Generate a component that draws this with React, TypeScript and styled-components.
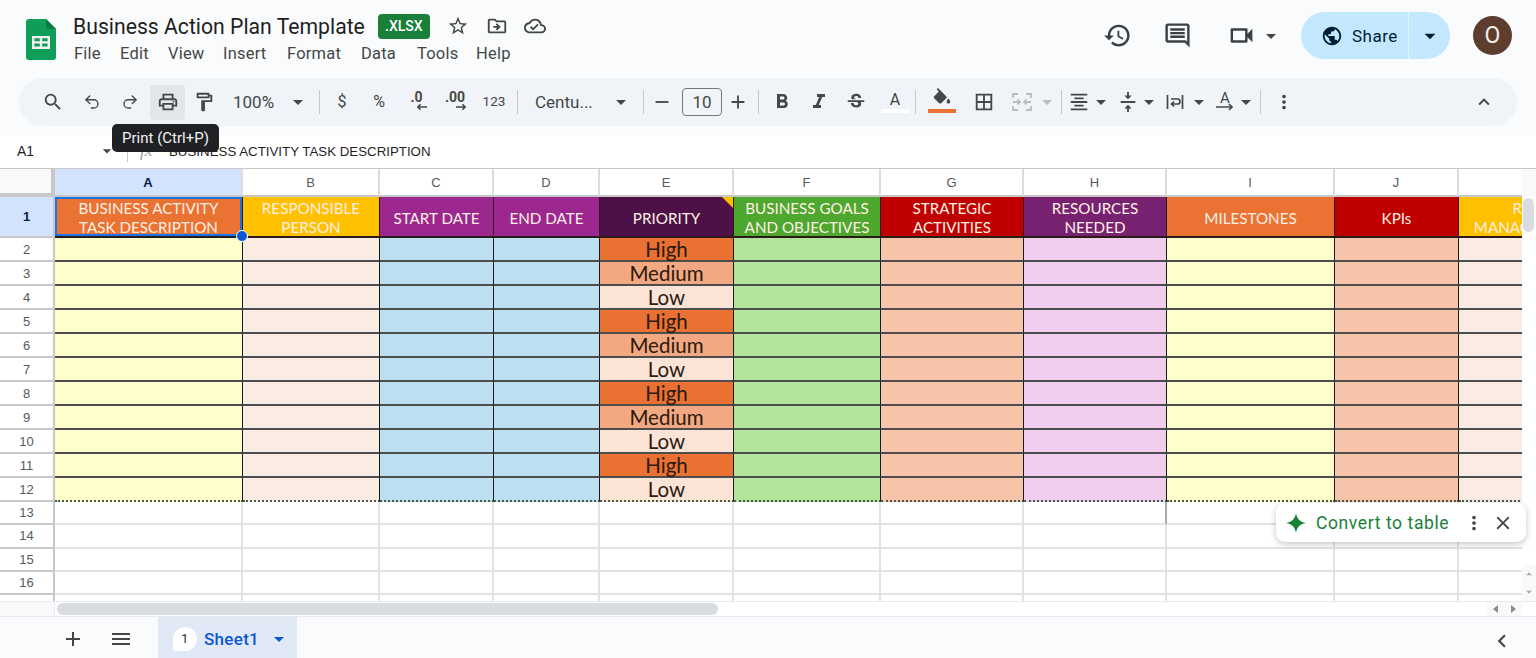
import React from 'react';
import styled, { createGlobalStyle } from 'styled-components';
import { Redo2, Undo2 } from 'lucide-react';
import {
  MdAdd, MdArrowDropDown, MdBorderAll, MdChevronLeft, MdClose, MdFormatAlignCenter, MdFormatBold,
  MdFormatItalic, MdHistory, MdKeyboardArrowUp, MdMenu, MdMoreVert, MdOutlineCloudDone, MdOutlineComment,
  MdOutlineDriveFileMove, MdOutlineFormatPaint, MdOutlinePrint, MdOutlineVideocam, MdPublic, MdRemove,
  MdSearch, MdStarBorder, MdStrikethroughS, MdVerticalAlignCenter,
} from 'react-icons/md';

const GlobalStyle = createGlobalStyle`
  html, body { margin: 0; padding: 0; background: #f9fbfd; }
  * { box-sizing: border-box; }
`;

const COLUMNS = [
  { name: 'A', width: 188, head: '#ea7233', body: '#ffffcb', title: 'BUSINESS ACTIVITY\nTASK DESCRIPTION' },
  { name: 'B', width: 137, head: '#ffc000', body: '#fbece3', title: 'RESPONSIBLE\nPERSON' },
  { name: 'C', width: 114, head: '#9c288f', body: '#bde0f1', title: 'START DATE' },
  { name: 'D', width: 106, head: '#9c288f', body: '#bde0f1', title: 'END DATE' },
  { name: 'E', width: 134, head: '#4d1147', body: '#fbe3d6', title: 'PRIORITY' },
  { name: 'F', width: 147, head: '#4ea72e', body: '#b3e49c', title: 'BUSINESS GOALS\nAND OBJECTIVES' },
  { name: 'G', width: 143, head: '#c00000', body: '#f5c4a9', title: 'STRATEGIC\nACTIVITIES' },
  { name: 'H', width: 143, head: '#782170', body: '#f0cdec', title: 'RESOURCES\nNEEDED' },
  { name: 'I', width: 168, head: '#ea7233', body: '#ffffcb', title: 'MILESTONES' },
  { name: 'J', width: 124, head: '#c00000', body: '#f5c4a9', title: 'KPIs' },
  { name: 'K', width: 140, head: '#ffc000', body: '#fbece3', title: 'RISK\nMANAGEMENT' },
];

const PRIORITIES = ['High', 'Medium', 'Low', 'High', 'Medium', 'Low', 'High', 'Medium', 'Low', 'High', 'Low'];
const PRIORITY_COLORS: Record<string, string> = { High: '#e97132', Medium: '#f2a881', Low: '#fbe3d6' };
const DATA_ROWS = [2, 3, 4, 5, 6, 7, 8, 9, 10, 11, 12];
const BLANK_ROWS = [13, 14, 15, 16, 17];

const Page = styled.div`
  position: relative;
  width: 1536px;
  height: 658px;
  overflow: hidden;
  background: #f9fbfd;
  font-family: Roboto, 'Liberation Sans', sans-serif;
  color: #444746;
`;

const TitleBar = styled.header`
  display: flex;
  align-items: flex-start;
  height: 78px;
  padding: 13px 24px 0 26px;
`;

const TitleBlock = styled.div`
  display: flex;
  flex-direction: column;
  margin-left: 17px;
`;

const TitleRow = styled.div`
  display: flex;
  align-items: center;
  height: 26px;
`;

const DocName = styled.span`
  font-size: 21.2px;
  color: #1f1f1f;
  white-space: nowrap;
`;

const Badge = styled.span`
  margin-left: 13px;
  width: 52px;
  height: 25px;
  border-radius: 4px;
  background: #188038;
  color: #fff;
  font-size: 14px;
  font-weight: 500;
  line-height: 25px;
  text-align: center;
`;

const TitleIcon = styled.span<{ $w: number }>`
  display: flex;
  justify-content: center;
  width: ${(p) => p.$w}px;
  color: #444746;
  font-size: 22px;
`;

const MenuRow = styled.nav`
  display: flex;
  margin-top: 4px;
  margin-left: 1px;
`;

const MenuItem = styled.span<{ $w: number }>`
  width: ${(p) => p.$w}px;
  font-size: 16.5px;
  letter-spacing: 0.2px;
  line-height: 22px;
  color: #444746;
`;

const RightActions = styled.div`
  display: flex;
  align-items: center;
  margin-left: auto;
  margin-top: -1px;
`;

const ActionIcon = styled.span<{ $w: number }>`
  display: flex;
  justify-content: center;
  width: ${(p) => p.$w}px;
  font-size: 29px;
  color: #3c4043;
`;

const VideoIcon = styled(ActionIcon)`
  margin-left: 16px;
`;

const SmallCaret = styled(MdArrowDropDown)`
  flex-shrink: 0;
  font-size: 24px;
`;

const ShareButton = styled.div`
  display: flex;
  align-items: center;
  width: 149px;
  height: 47px;
  margin-left: 18px;
  border-radius: 24px;
  background: #c2e7ff;
  color: #001d35;
`;

const ShareMain = styled.div`
  display: flex;
  align-items: center;
  gap: 9px;
  width: 108px;
  height: 100%;
  padding-left: 20px;
  border-right: 1.5px solid #e3f3ff;
  font-size: 17px;
  letter-spacing: 0.5px;
  svg { font-size: 22px; }
`;

const ShareCaret = styled.div`
  display: flex;
  flex: 1;
  justify-content: center;
  font-size: 26px;
`;

const Avatar = styled.div`
  width: 39px;
  height: 39px;
  margin-left: 23px;
  border-radius: 50%;
  background: #5d3d2e;
  color: #f5ece6;
  font-size: 23px;
  line-height: 39px;
  text-align: center;
`;

const Toolbar = styled.div`
  display: flex;
  align-items: center;
  height: 48px;
  margin: 0 19px;
  padding: 0 18px 0 14px;
  border-radius: 24px;
  background: #f0f4f9;
  font-size: 14px;
  color: #444746;
`;

const Tool = styled.div<{ $w: number; $size?: number; $active?: boolean }>`
  position: relative;
  display: flex;
  flex-shrink: 0;
  align-items: center;
  justify-content: center;
  width: ${(p) => p.$w}px;
  height: 35px;
  border-radius: 4px;
  font-size: ${(p) => p.$size ?? 22}px;
  background: ${(p) => (p.$active ? '#e2e6ea' : 'transparent')};
  svg { flex-shrink: 0; }
`;

const ToolText = styled.span<{ $w: number; $pad: number }>`
  flex-shrink: 0;
  width: ${(p) => p.$w}px;
  padding-left: ${(p) => p.$pad}px;
  font-size: 17px;
  color: #444746;
`;

const ToolLabel = styled.span<{ $size: number; $weight?: number }>`
  font-size: ${(p) => p.$size}px;
  font-weight: ${(p) => p.$weight ?? 400};
  line-height: 1;
`;

const ColorLetter = styled.span`
  margin-top: -4px;
  font-size: 16px;
  line-height: 1;
`;

const RotateLetter = styled.span`
  margin-top: -8px;
  font-size: 15px;
  line-height: 1;
`;

const DecimalLabel = styled.span`
  position: relative;
  top: -5px;
  font-size: 14px;
  font-weight: 700;
  line-height: 1;
`;

const DecimalArrow = styled.svg`
  position: absolute;
  bottom: 9px;
  right: 8px;
`;

const Separator = styled.div<{ $w: number }>`
  display: flex;
  flex-shrink: 0;
  justify-content: center;
  width: ${(p) => p.$w}px;
  &::after {
    content: '';
    width: 1px;
    height: 24px;
    background: #c7c7c7;
  }
`;

const SizeBox = styled.div`
  flex-shrink: 0;
  width: 40px;
  height: 28px;
  margin-left: 8px;
  border: 1px solid #747775;
  border-radius: 4px;
  font-size: 17px;
  line-height: 26px;
  text-align: center;
`;

const ColorBar = styled.span<{ $color: string }>`
  position: absolute;
  top: 24px;
  left: 50%;
  width: 28px;
  height: 4px;
  margin-left: -14px;
  background: ${(p) => p.$color};
`;

const CollapseTool = styled(Tool)`
  margin-left: auto;
`;

const FormulaBar = styled.div`
  display: flex;
  align-items: center;
  height: 33px;
  margin-top: 10px;
  padding: 0 0 2px 17px;
  background: #fff;
  border-bottom: 1px solid #c7c7c7;
  font-family: 'Liberation Sans', Arial, sans-serif;
  font-size: 13.3px;
  color: #1f1f1f;
`;

const CellName = styled.span`
  width: 80px;
  font-size: 14px;
`;

const NameCaret = styled(MdArrowDropDown)`
  color: #444746;
  font-size: 20px;
`;

const FormulaDivider = styled.span`
  width: 1px;
  height: 22px;
  margin-left: 10px;
  background: #c7c7c7;
`;

const FxMark = styled.span`
  width: 29px;
  margin-left: 12px;
  font-family: 'Liberation Serif', serif;
  font-size: 17px;
  font-style: italic;
  color: #9aa0a6;
`;

const SheetArea = styled.div`
  display: flex;
  height: 432px;
  background: #fff;
`;

const GridClip = styled.div`
  width: 1522px;
  height: 432px;
  overflow: hidden;
`;

const Grid = styled.div`
  display: grid;
  grid-template-columns: 55px ${COLUMNS.map((c) => `${c.width}px`).join(' ')};
  grid-template-rows: 28px 41px repeat(11, 24px) repeat(5, 23.25px);
  width: ${55 + COLUMNS.reduce((sum, c) => sum + c.width, 0)}px;
`;

const Corner = styled.div`
  background: #f8f9fa;
  border-right: 4px solid #c7c7c7;
  border-bottom: 4px solid #c7c7c7;
`;

const ColLetter = styled.div<{ $selected?: boolean }>`
  display: flex;
  align-items: center;
  justify-content: center;
  background: ${(p) => (p.$selected ? '#d3e3fd' : '#fff')};
  border-right: 2px solid #dcdcdc;
  border-bottom: 2px solid #c7c7c7;
  font-family: 'Liberation Sans', Arial, sans-serif;
  font-size: 13px;
  font-weight: ${(p) => (p.$selected ? 700 : 400)};
  color: ${(p) => (p.$selected ? '#041e49' : '#575a5c')};
`;

const RowNumber = styled.div<{ $selected?: boolean }>`
  display: flex;
  align-items: center;
  justify-content: center;
  background: ${(p) => (p.$selected ? '#d3e3fd' : '#fff')};
  border-right: 2px solid #c7c7c7;
  border-bottom: 2px solid #c7c7c7;
  font-family: 'Liberation Sans', Arial, sans-serif;
  font-size: 13px;
  font-weight: ${(p) => (p.$selected ? 700 : 400)};
  color: ${(p) => (p.$selected ? '#041e49' : '#575a5c')};
`;

const HeaderCell = styled.div<{ $bg: string; $selected?: boolean }>`
  position: relative;
  display: flex;
  align-items: center;
  justify-content: center;
  padding: 3px 2px 0;
  background: ${(p) => p.$bg};
  border-right: 1px solid #2a1a1a;
  border-bottom: 2px solid #2a1a1a;
  box-shadow: ${(p) => (p.$selected ? 'inset 0 0 0 2px #1a73e8' : 'none')};
  font-family: Lato, 'Open Sans', sans-serif;
  font-size: 15.2px;
  line-height: 19px;
  text-align: center;
  white-space: pre-line;
  color: #fff0e4;
`;

const SelectionHandle = styled.span`
  position: absolute;
  right: -6px;
  bottom: -6px;
  z-index: 2;
  width: 12px;
  height: 12px;
  border: 1px solid #fff;
  border-radius: 50%;
  background: #0b57d0;
`;

const NoteCorner = styled.span`
  position: absolute;
  top: 0;
  right: 0;
  width: 0;
  height: 0;
  border-top: 11px solid #ffc000;
  border-left: 11px solid transparent;
`;

const DataCell = styled.div<{ $bg: string; $last: boolean }>`
  display: flex;
  align-items: center;
  justify-content: center;
  background: ${(p) => p.$bg};
  border-right: 1.5px solid #1a1a1a;
  border-bottom: 2px ${(p) => (p.$last ? 'dotted #4a5a4a' : 'solid #4d4d4d')};
  font-family: Lato, 'Open Sans', sans-serif;
  font-size: 20.5px;
  color: #2a1a10;
`;

const BlankCell = styled.div<{ $dark?: boolean }>`
  background: #fff;
  border-right: 2px solid ${(p) => (p.$dark ? '#a8a8a8' : '#e2e2e2')};
  border-bottom: 2px solid #e2e2e2;
`;

const VScrollbar = styled.div`
  display: flex;
  flex-direction: column;
  width: 14px;
  background: #fff;
`;

const VCornerCap = styled.div`
  height: 28px;
  background: #f8f9fa;
`;

const VThumb = styled.div`
  width: 11px;
  height: 34px;
  margin: 1px 0 0 1px;
  border-radius: 6px;
  background: #d9dce1;
`;

const ScrollButtons = styled.div`
  display: flex;
  flex-direction: column;
  margin-top: auto;
  background: #f8f9fa;
  color: #a6a8aa;
  font-size: 14px;
  svg { display: block; margin: 2px 0; }
`;

const HScrollbar = styled.div`
  display: flex;
  align-items: center;
  height: 16px;
  background: #fff;
  border-top: 1px solid #e8eaed;
  border-bottom: 1px solid #e8eaed;
`;

const HScrollGutter = styled.div`
  width: 55px;
  height: 100%;
  background: #f8f9fa;
  border-right: 1px solid #e8eaed;
`;

const HThumb = styled.div`
  width: 661px;
  height: 12px;
  margin-left: 2px;
  border-radius: 6px;
  background: #d9dce1;
`;

const HButtons = styled.div`
  display: flex;
  align-items: center;
  justify-content: space-around;
  width: 36px;
  height: 100%;
  margin-left: auto;
  margin-right: 14px;
  background: #f8f9fa;
`;

const Arrow = styled.span<{ $left?: boolean }>`
  width: 0;
  height: 0;
  border-top: 4px solid transparent;
  border-bottom: 4px solid transparent;
  border-${(p) => (p.$left ? 'right' : 'left')}: 5px solid #8a8c8e;
`;

const BottomBar = styled.footer`
  display: flex;
  align-items: center;
  height: 41px;
  padding-left: 61px;
  background: #f9fbfd;
  color: #444746;
`;

const BottomIcon = styled.span<{ $w: number }>`
  display: flex;
  justify-content: center;
  width: ${(p) => p.$w}px;
  margin-top: 3px;
  font-size: 24px;
`;

const SheetTab = styled.div`
  display: flex;
  align-items: center;
  width: 139px;
  height: 41px;
  margin-left: 1px;
  padding: 3px 0 0 15px;
  background: #e1e9f7;
  color: #0b57d0;
  font-size: 17px;
  font-weight: 500;
  letter-spacing: 0.3px;
  svg { margin-left: 8px; font-size: 24px; }
`;

const TabBubble = styled.span`
  width: 24px;
  height: 24px;
  margin-right: 7px;
  border-radius: 50% 50% 50% 0;
  background: #fff;
  color: #1f1f1f;
  font-size: 12.5px;
  font-weight: 400;
  line-height: 24px;
  text-align: center;
`;

const CollapseSheets = styled.span`
  display: flex;
  margin: 7px 21px 0 auto;
  font-size: 26px;
`;

const Tooltip = styled.div`
  position: absolute;
  top: 124px;
  left: 112px;
  z-index: 5;
  width: 107px;
  height: 28px;
  border-radius: 5px;
  background: #202124;
  color: #f1f3f4;
  font-size: 15px;
  line-height: 28px;
  text-align: center;
`;

const TablePrompt = styled.div`
  position: absolute;
  top: 503px;
  left: 1276px;
  z-index: 5;
  display: flex;
  align-items: center;
  width: 250px;
  height: 39px;
  padding-left: 10px;
  border-radius: 9px;
  background: #fff;
  box-shadow: 0 2px 6px rgba(60, 64, 67, 0.3);
  color: #188038;
  font-size: 17.5px;
  letter-spacing: 0.6px;
`;

const PromptText = styled.span`
  margin-left: 10px;
  white-space: nowrap;
`;

const PromptActions = styled.span`
  display: flex;
  align-items: center;
  gap: 7px;
  margin-left: auto;
  margin-right: 12px;
  color: #444746;
  font-size: 22px;
`;

const SheetsLogo = () => (
  <svg width="30" height="41" viewBox="0 0 30 41" style={{ flexShrink: 0, marginTop: 6 }}>
    <path d="M3 0h17l10 10v28a3 3 0 0 1-3 3H3a3 3 0 0 1-3-3V3a3 3 0 0 1 3-3z" fill="#0f9d58" />
    <path d="M20 0l10 10h-7a3 3 0 0 1-3-3z" fill="#0a7a44" />
    <path d="M6 17h18v13H6zm2.400 2.300v3h5.400v-3zm7.800 0v3h5.400v-3zm-7.800 5.200v3h5.400v-3zm7.800 0v3h5.400v-3z" fill="#f1f1f1" fillRule="evenodd" />
  </svg>
);

const FillIcon = () => (
  <svg width="22" height="22" viewBox="0 0 24 24" fill="#444746" style={{ marginTop: -6 }}>
    <path d="M16.560 8.940L7.620 0 6.210 1.410l2.380 2.380-5.150 5.150c-.59.59-.59 1.540 0 2.120l5.500 5.500c.29.29.68.44 1.060.44s.77-.15 1.060-.44l5.500-5.500c.59-.58.59-1.530 0-2.110zM19 11.500s-2 2.170-2 3.500c0 1.100.9 2 2 2s2-.9 2-2c0-1.330-2-3.500-2-3.500z" />
  </svg>
);

const MergeIcon = () => (
  <svg width="22" height="22" viewBox="0 0 22 22" fill="none" stroke="#b9bdc1" strokeWidth="1.8">
    <path d="M7 3H2v4M2 15v4h5M15 3h5v4M20 15v4h-5" />
    <path d="M2 11h7M6.500 8.500 9 11l-2.500 2.500M20 11h-7M15.500 8.500 13 11l2.500 2.500" />
  </svg>
);

const WrapIcon = () => (
  <svg width="20" height="20" viewBox="0 0 20 20" fill="none" stroke="#444746" strokeWidth="1.7">
    <path d="M2.500 3v14M17.500 3v14M6 7h6.500a2.500 2.500 0 0 1 0 5H7M9 9.500 6.500 12 9 14.500" />
  </svg>
);

const RotateIcon = () => (
  <svg width="20" height="8" viewBox="0 0 20 8" fill="none" stroke="#444746" strokeWidth="1.7" style={{ position: 'absolute', bottom: 9 }}>
    <path d="M1 4h16M14 1l3 3-3 3" />
  </svg>
);

const Sparkle = () => (
  <svg width="20" height="20" viewBox="0 0 20 20" fill="#188038">
    <path d="M10 0c1 5.500 3.500 9 10 10-6.500 1-9 4.500-10 10-1-5.500-3.500-9-10-10 6.500-1 9-4.500 10-10z" />
  </svg>
);

const DecimalTool = ({ label, w, left }: { label: string; w: number; left: boolean }) => (
  <Tool $w={w}>
    <DecimalLabel>{label}</DecimalLabel>
    <DecimalArrow width="11" height="8" viewBox="0 0 12 8" fill="none" stroke="#444746" strokeWidth="1.7">
      <path d={left ? 'M12 4H2M5 1 2 4l3 3' : 'M0 4h10M7 1l3 3-3 3'} />
    </DecimalArrow>
  </Tool>
);

const Caret = ({ w, color }: { w: number; color?: string }) => (
  <Tool $w={w} style={color ? { color } : undefined}>
    <SmallCaret />
  </Tool>
);

const App: React.FC = () => {
  return (
    <Page>
      <GlobalStyle />
      <TitleBar>
        <SheetsLogo />
        <TitleBlock>
          <TitleRow>
            <DocName>Business Action Plan Template</DocName>
            <Badge>.XLSX</Badge>
            <TitleIcon $w={56}><MdStarBorder /></TitleIcon>
            <TitleIcon $w={22}><MdOutlineDriveFileMove /></TitleIcon>
            <TitleIcon $w={54}><MdOutlineCloudDone /></TitleIcon>
          </TitleRow>
          <MenuRow>
            <MenuItem $w={46}>File</MenuItem>
            <MenuItem $w={48}>Edit</MenuItem>
            <MenuItem $w={55}>View</MenuItem>
            <MenuItem $w={64}>Insert</MenuItem>
            <MenuItem $w={74}>Format</MenuItem>
            <MenuItem $w={56}>Data</MenuItem>
            <MenuItem $w={59}>Tools</MenuItem>
            <MenuItem $w={40}>Help</MenuItem>
          </MenuRow>
        </TitleBlock>
        <RightActions>
          <ActionIcon $w={60}><MdHistory /></ActionIcon>
          <ActionIcon $w={60}><MdOutlineComment /></ActionIcon>
          <VideoIcon $w={36}><MdOutlineVideocam /></VideoIcon>
          <SmallCaret />
          <ShareButton>
            <ShareMain>
              <MdPublic />
              Share
            </ShareMain>
            <ShareCaret><MdArrowDropDown /></ShareCaret>
          </ShareButton>
          <Avatar>O</Avatar>
        </RightActions>
      </TitleBar>

      <Toolbar>
        <Tool $w={39}><MdSearch /></Tool>
        <Tool $w={39}><Undo2 size={18} strokeWidth={1.8} /></Tool>
        <Tool $w={38}><Redo2 size={18} strokeWidth={1.8} /></Tool>
        <Tool $w={35} $active style={{ margin: '0 1px' }}><MdOutlinePrint /></Tool>
        <Tool $w={36}><MdOutlineFormatPaint /></Tool>
        <ToolText $w={60} $pad={11}>100%</ToolText>
        <Caret w={32} />
        <Separator $w={10} />
        <Tool $w={36}><ToolLabel $size={16}>$</ToolLabel></Tool>
        <Tool $w={38}><ToolLabel $size={16}>%</ToolLabel></Tool>
        <DecimalTool label=".0" w={37} left />
        <DecimalTool label=".00" w={40} left={false} />
        <Tool $w={38}><ToolLabel $size={13.5}>123</ToolLabel></Tool>
        <Separator $w={8} />
        <ToolText $w={85} $pad={14}>Centu...</ToolText>
        <Caret w={30} />
        <Separator $w={14} />
        <Tool $w={24}><MdRemove /></Tool>
        <SizeBox>10</SizeBox>
        <Tool $w={32}><MdAdd /></Tool>
        <Separator $w={8} />
        <Tool $w={40} $size={24}><MdFormatBold /></Tool>
        <Tool $w={34} $size={24}><MdFormatItalic /></Tool>
        <Tool $w={40}><MdStrikethroughS /></Tool>
        <Tool $w={38}>
          <ColorLetter>A</ColorLetter>
          <ColorBar $color="#ffffff" />
        </Tool>
        <Separator $w={2} />
        <Tool $w={52}>
          <FillIcon />
          <ColorBar $color="#e97132" />
        </Tool>
        <Tool $w={32}><MdBorderAll /></Tool>
        <Tool $w={44}><MergeIcon /></Tool>
        <Caret w={6} color="#b9bdc1" />
        <Separator $w={22} />
        <Tool $w={14}><MdFormatAlignCenter /></Tool>
        <Caret w={30} />
        <Tool $w={24}><MdVerticalAlignCenter /></Tool>
        <Caret w={18} />
        <Tool $w={34}><WrapIcon /></Tool>
        <Caret w={14} />
        <Tool $w={38}>
          <RotateLetter>A</RotateLetter>
          <RotateIcon />
        </Tool>
        <Caret w={4} />
        <Separator $w={24} />
        <Tool $w={24}><MdMoreVert /></Tool>
        <CollapseTool $w={30}><MdKeyboardArrowUp /></CollapseTool>
      </Toolbar>

      <FormulaBar>
        <CellName>A1</CellName>
        <NameCaret />
        <FormulaDivider />
        <FxMark>fx</FxMark>
        BUSINESS ACTIVITY TASK DESCRIPTION
      </FormulaBar>

      <SheetArea>
        <GridClip>
          <Grid>
            <Corner />
            {COLUMNS.map((c) => (
              <ColLetter key={c.name} $selected={c.name === 'A'}>{c.name}</ColLetter>
            ))}

            <RowNumber $selected>1</RowNumber>
            {COLUMNS.map((c) => (
              <HeaderCell key={c.name} $bg={c.head} $selected={c.name === 'A'}>
                {c.title}
                {c.name === 'A' && <SelectionHandle />}
                {c.name === 'E' && <NoteCorner />}
              </HeaderCell>
            ))}

            {DATA_ROWS.map((row, i) => (
              <React.Fragment key={row}>
                <RowNumber>{row}</RowNumber>
                {COLUMNS.map((c) => {
                  const priority = c.name === 'E' ? PRIORITIES[i] : '';
                  return (
                    <DataCell key={c.name} $bg={priority ? PRIORITY_COLORS[priority] : c.body} $last={row === 12}>
                      {priority}
                    </DataCell>
                  );
                })}
              </React.Fragment>
            ))}

            {BLANK_ROWS.map((row) => (
              <React.Fragment key={row}>
                <RowNumber>{row}</RowNumber>
                {COLUMNS.map((c) => (
                  <BlankCell key={c.name} $dark={row === 13 && c.name === 'H'} />
                ))}
              </React.Fragment>
            ))}
          </Grid>
        </GridClip>
        <VScrollbar>
          <VCornerCap />
          <VThumb />
          <ScrollButtons>
            <MdArrowDropDown style={{ transform: 'rotate(180deg)' }} />
            <MdArrowDropDown />
          </ScrollButtons>
        </VScrollbar>
      </SheetArea>

      <HScrollbar>
        <HScrollGutter />
        <HThumb />
        <HButtons>
          <Arrow $left />
          <Arrow />
        </HButtons>
      </HScrollbar>

      <BottomBar>
        <BottomIcon $w={24}><MdAdd /></BottomIcon>
        <BottomIcon $w={72}><MdMenu /></BottomIcon>
        <SheetTab>
          <TabBubble>1</TabBubble>
          Sheet1
          <MdArrowDropDown />
        </SheetTab>
        <CollapseSheets><MdChevronLeft /></CollapseSheets>
      </BottomBar>

      <Tooltip>Print (Ctrl+P)</Tooltip>

      <TablePrompt>
        <Sparkle />
        <PromptText>Convert to table</PromptText>
        <PromptActions>
          <MdMoreVert />
          <MdClose />
        </PromptActions>
      </TablePrompt>
    </Page>
  );
};

export default App;
